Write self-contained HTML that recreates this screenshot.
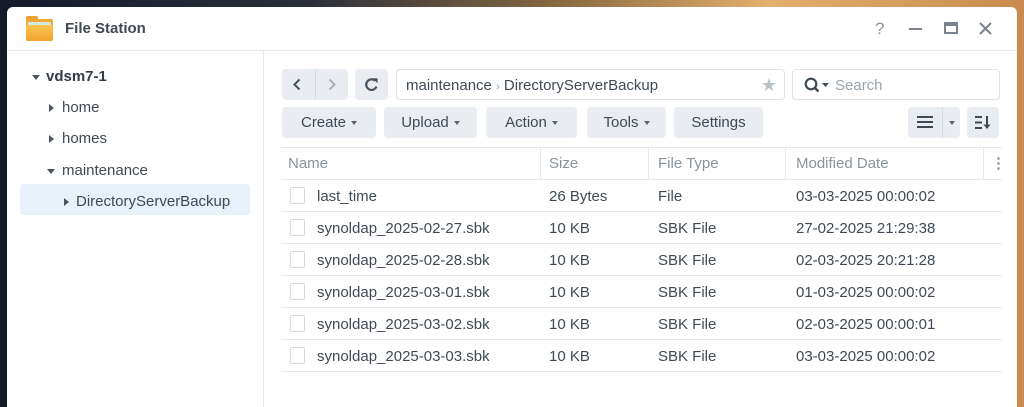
<!DOCTYPE html>
<html><head><style>
*{box-sizing:border-box;margin:0;padding:0}
body{width:1024px;height:407px;overflow:hidden;position:relative;font-family:"Liberation Sans",sans-serif;color:#3f4a55;
background:linear-gradient(90deg,#141a2a 0%,#2a2f3a 30%,#8a6a40 55%,#e3b070 75%,#c98a50 100%)}
.win{position:absolute;left:7px;top:7px;width:1010px;height:400px;background:#fff;border-radius:6px 6px 0 0;overflow:hidden}
.a{position:absolute}
.title{left:0;top:0;width:1010px;height:44px;border-bottom:1px solid #e3e8ee}
.btn{position:absolute;background:#e9edf2;border-radius:4px;font-size:15px;height:31px;line-height:32px;text-align:center;color:#3f4a55}
.car{display:inline-block;width:0;height:0;border-left:3.5px solid transparent;border-right:3.5px solid transparent;border-top:4px solid #5a6470;vertical-align:middle;margin-left:5px}
.tree{font-size:15px;position:absolute}
.tri{display:inline-block;width:0;height:0;border-top:4px solid transparent;border-bottom:4px solid transparent;border-left:5px solid #4a535e}
.trd{display:inline-block;width:0;height:0;border-left:4px solid transparent;border-right:4px solid transparent;border-top:5px solid #4a535e}
.row{position:absolute;left:274px;width:721px;height:32px;border-bottom:1px solid #e6eaef;font-size:15px;line-height:33px}
.row span{position:absolute}
.fi{position:absolute;left:9px;top:7px;width:15px;height:17px;border:1px solid #d5d9de;border-radius:2px}
</style></head><body>
<div class="win">
 <div class="a title">
  <div class="a" style="left:19px;top:9px;width:27px;height:26px">
   <div class="a" style="left:0;top:0;width:12px;height:6px;background:#e9a22f;border-radius:2px 2px 0 0"></div>
   <div class="a" style="left:0;top:3px;width:27px;height:22px;background:#f0a832;border-radius:2px"></div>
   <div class="a" style="left:2px;top:6px;width:23px;height:4px;background:#cfe8e0"></div>
   <div class="a" style="left:0;top:9px;width:27px;height:16px;background:linear-gradient(#fbc451,#f3a22c);border-radius:2px"></div>
  </div>
  <div class="a" style="left:58px;top:13px;font-size:15px;font-weight:bold;color:#414a54">File Station</div>
  <div class="a" style="left:868px;top:12px;font-size:17px;color:#8a939c">?</div>
  <div class="a" style="left:902px;top:21px;width:13px;height:2px;background:#7a838c"></div>
  <div class="a" style="left:937px;top:15px;width:14px;height:12px;border:2px solid #7a838c;border-top-width:4px"></div>
  <svg class="a" style="left:972px;top:15px" width="13" height="13" viewBox="0 0 13 13"><path d="M1 1L12 12M12 1L1 12" stroke="#7a838c" stroke-width="2"/></svg>
 </div>
 <div class="a" style="left:256px;top:44px;width:1px;height:370px;background:#e3e8ee"></div>
 <div class="tree" style="left:25px;top:61px;font-weight:bold;color:#333c46"><span class="trd" style="margin-right:6px;vertical-align:middle"></span>vdsm7-1</div>
 <div class="tree" style="left:42px;top:92px"><span class="tri" style="margin-right:8px"></span>home</div>
 <div class="tree" style="left:42px;top:123px"><span class="tri" style="margin-right:8px"></span>homes</div>
 <div class="tree" style="left:40px;top:155px"><span class="trd" style="margin-right:7px;vertical-align:middle"></span>maintenance</div>
 <div class="a" style="left:13px;top:177px;width:230px;height:31px;background:#e8f0fa;border-radius:3px"></div>
 <div class="tree" style="left:57px;top:186px"><span class="tri" style="margin-right:7px"></span>DirectoryServerBackup</div>

 <div class="btn" style="left:275px;top:62px;width:66px;height:31px">
  <svg class="a" style="left:11px;top:9px" width="8" height="13" viewBox="0 0 8 13"><path d="M6.5 1.5L1.5 6.5L6.5 11.5" fill="none" stroke="#4a535e" stroke-width="2"/></svg>
  <span class="a" style="left:33px;top:0;width:1px;height:31px;background:#d5dbe2"></span>
  <svg class="a" style="left:46px;top:9px" width="8" height="13" viewBox="0 0 8 13"><path d="M1.5 1.5L6.5 6.5L1.5 11.5" fill="none" stroke="#a8b0b8" stroke-width="2"/></svg>
 </div>
 <div class="btn" style="left:348px;top:62px;width:33px;height:31px">
  <svg class="a" style="left:9px;top:8px" width="15" height="15" viewBox="0 0 15 15"><path d="M12.5 9.5A5.3 5.3 0 1 1 11.2 3.8" fill="none" stroke="#4a535e" stroke-width="2.2"/><path d="M8.5 1.2L13.6 1.2L13.6 6.2Z" fill="#4a535e"/></svg>
 </div>
 <div class="a" style="left:389px;top:62px;width:389px;height:31px;border:1px solid #dde2e8;border-radius:4px;font-size:15px;line-height:31px;padding-left:9px">maintenance <span style="color:#8a939c;font-size:11px">›</span> DirectoryServerBackup<span class="a" style="right:7px;top:0;color:#b9c0c8;font-size:18px">★</span></div>
 <div class="a" style="left:785px;top:62px;width:208px;height:31px;border:1px solid #dde2e8;border-radius:4px;font-size:15px;line-height:31px;padding-left:42px;color:#9aa3ac">Search
  <svg class="a" style="left:11px;top:7px" width="28" height="16" viewBox="0 0 28 16"><circle cx="7" cy="7" r="5.3" fill="none" stroke="#3f4a55" stroke-width="2.2"/><path d="M10.5 10.5L14.5 14.5" stroke="#3f4a55" stroke-width="2.4"/><path d="M18 6L25 6L21.5 10Z" fill="#3f4a55"/></svg>
 </div>

 <div class="btn" style="left:275px;top:100px;width:94px">Create<span class="car"></span></div>
 <div class="btn" style="left:377px;top:100px;width:93px">Upload<span class="car"></span></div>
 <div class="btn" style="left:479px;top:100px;width:91px">Action<span class="car"></span></div>
 <div class="btn" style="left:580px;top:100px;width:79px">Tools<span class="car"></span></div>
 <div class="btn" style="left:667px;top:100px;width:89px">Settings</div>
 <div class="btn" style="left:901px;top:100px;width:52px">
  <svg class="a" style="left:9px;top:9px" width="16" height="12" viewBox="0 0 16 12"><path d="M0 1H16M0 6H16M0 11H16" stroke="#3f4a55" stroke-width="2"/></svg>
  <span class="a" style="left:34px;top:0;width:1px;height:31px;background:#d5dbe2"></span><span class="car a" style="left:36px;top:14px"></span></div>
 <div class="btn" style="left:960px;top:100px;width:32px">
  <svg class="a" style="left:8px;top:8px" width="17" height="15" viewBox="0 0 17 15"><path d="M0 2H7M0 7.5H7M0 13H7" stroke="#3f4a55" stroke-width="2"/><path d="M12 1V12" stroke="#3f4a55" stroke-width="2"/><path d="M8.5 9.5L15.5 9.5L12 14Z" fill="#3f4a55"/></svg>
 </div>

 <div class="a" style="left:274px;top:140px;width:721px;height:1px;background:#e3e8ee"></div>
 <div class="row" style="top:140px;color:#8a939c;height:33px;line-height:34px"><span style="left:7px">Name</span><span style="left:259px;top:0;width:1px;height:32px;background:#e6eaef"></span><span style="left:268px">Size</span><span style="left:367px;top:0;width:1px;height:32px;background:#e6eaef"></span><span style="left:377px">File Type</span><span style="left:504px;top:0;width:1px;height:32px;background:#e6eaef"></span><span style="left:515px">Modified Date</span><span style="left:702px;top:0;width:1px;height:32px;background:#e6eaef"></span><span style="left:710px;font-weight:bold">⋮</span></div>
 <div class="row" style="top:173px"><div class="fi"></div><span style="left:36px">last_time</span><span style="left:268px">26 Bytes</span><span style="left:377px">File</span><span style="left:515px">03-03-2025 00:00:02</span></div>
 <div class="row" style="top:205px"><div class="fi"></div><span style="left:36px">synoldap_2025-02-27.sbk</span><span style="left:268px">10 KB</span><span style="left:377px">SBK File</span><span style="left:515px">27-02-2025 21:29:38</span></div>
 <div class="row" style="top:237px"><div class="fi"></div><span style="left:36px">synoldap_2025-02-28.sbk</span><span style="left:268px">10 KB</span><span style="left:377px">SBK File</span><span style="left:515px">02-03-2025 20:21:28</span></div>
 <div class="row" style="top:269px"><div class="fi"></div><span style="left:36px">synoldap_2025-03-01.sbk</span><span style="left:268px">10 KB</span><span style="left:377px">SBK File</span><span style="left:515px">01-03-2025 00:00:02</span></div>
 <div class="row" style="top:301px"><div class="fi"></div><span style="left:36px">synoldap_2025-03-02.sbk</span><span style="left:268px">10 KB</span><span style="left:377px">SBK File</span><span style="left:515px">02-03-2025 00:00:01</span></div>
 <div class="row" style="top:333px"><div class="fi"></div><span style="left:36px">synoldap_2025-03-03.sbk</span><span style="left:268px">10 KB</span><span style="left:377px">SBK File</span><span style="left:515px">03-03-2025 00:00:02</span></div>
</div>
</body></html>
